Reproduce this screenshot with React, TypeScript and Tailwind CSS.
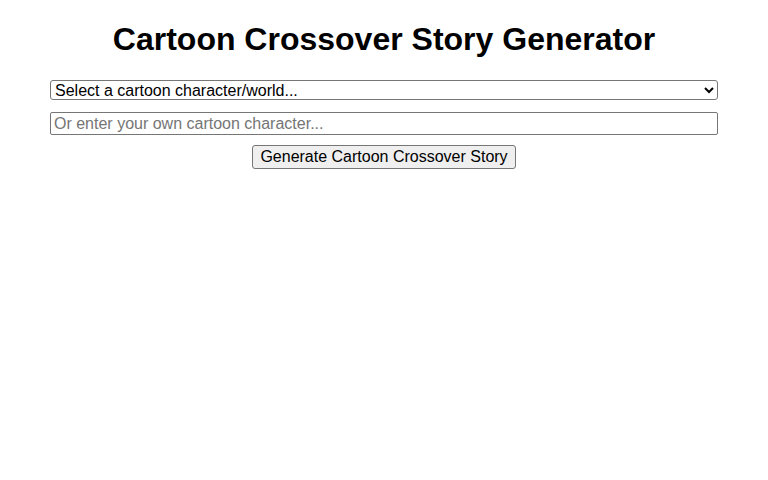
import React from "react";

export default function App() {
  return (
    <div className="min-h-[480px] bg-white px-[50px] text-black" style={{ fontFamily: '"Liberation Sans", Arial, sans-serif' }}>
      <h1 className="pt-[21px] mb-[22px] text-center text-[32px] font-bold leading-[37px]">
        Cartoon Crossover Story Generator
      </h1>
      <select
        defaultValue=""
        className="block w-full h-[20px] rounded-[3px] border border-[#767676] bg-white text-[16px] leading-[18px] pl-0"
      >
        <option value="">Select a cartoon character/world...</option>
        <option value="a">SpongeBob SquarePants</option>
      </select>
      <input
        type="text"
        placeholder="Or enter your own cartoon character..."
        className="mt-[12px] block w-full h-[23px] rounded-[2px] border border-[#767676] bg-white px-[3px] text-[16px] leading-[18px] placeholder:text-[#757575]"
      />
      <div className="flex justify-center mt-[10px]">
        <button className="h-[24px] rounded-[3px] border border-[#767676] bg-[#efefef] px-[7px] text-[16px] leading-[18px]">
          Generate Cartoon Crossover Story
        </button>
      </div>
    </div>
  );
}
